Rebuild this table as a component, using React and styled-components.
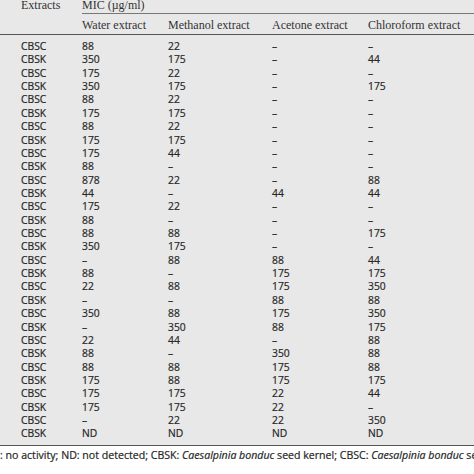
import React from "react";
import styled, { createGlobalStyle } from "styled-components";

const GlobalStyle = createGlobalStyle`
  html, body {
    margin: 0;
    padding: 0;
    background: #ffffff;
    overflow: hidden;
  }
`;

const Page = styled.div`
  width: 474px;
  height: 474px;
  overflow: hidden;
  background: #ffffff;
`;

const Sheet = styled.div`
  margin-top: -3px;
  background: #e8e8e8;
  border-bottom: 1.5px solid #555555;
`;

const Table = styled.table`
  width: 474px;
  border-collapse: collapse;
  table-layout: fixed;
`;

const HeadCell = styled.th`
  font-family: "Liberation Serif", "Times New Roman", serif;
  font-size: 12px;
  font-weight: normal;
  color: #333333;
  text-align: left;
  line-height: 14px;
  padding: ${(p) => (p.top ? "1px 0 1px" : "4px 0 2px")};
  padding-left: ${(p) => (p.first ? "21px" : "0")};
  white-space: nowrap;
  border-bottom: ${(p) => p.rule || "none"};
`;

const Row = styled.tr`
  &:first-child td {
    padding-top: 5px;
  }
  &:last-child td {
    padding-bottom: 4px;
  }
`;

const Cell = styled.td`
  font-family: "Open Sans", "Liberation Sans", sans-serif;
  font-size: 10.3px;
  color: #262626;
  line-height: 13.36px;
  padding: 0;
  padding-left: ${(p) => (p.first ? "21px" : "0")};
  white-space: nowrap;
  -webkit-text-stroke: 0.2px #262626;
`;

const Footnote = styled.div`
  font-family: "Open Sans", "Liberation Sans", sans-serif;
  font-size: 10.6px;
  color: #262626;
  line-height: 14px;
  padding-top: 2px;
  white-space: nowrap;
  overflow: hidden;
  -webkit-text-stroke: 0.2px #262626;
  em {
    font-style: italic;
  }
`;

const rows = [
  ["CBSC", "88", "22", "–", "–"],
  ["CBSK", "350", "175", "–", "44"],
  ["CBSC", "175", "22", "–", "–"],
  ["CBSK", "350", "175", "–", "175"],
  ["CBSC", "88", "22", "–", "–"],
  ["CBSK", "175", "175", "–", "–"],
  ["CBSC", "88", "22", "–", "–"],
  ["CBSK", "175", "175", "–", "–"],
  ["CBSC", "175", "44", "–", "–"],
  ["CBSK", "88", "–", "–", "–"],
  ["CBSC", "878", "22", "–", "88"],
  ["CBSK", "44", "–", "44", "44"],
  ["CBSC", "175", "22", "–", "–"],
  ["CBSK", "88", "–", "–", "–"],
  ["CBSC", "88", "88", "–", "175"],
  ["CBSK", "350", "175", "–", "–"],
  ["CBSC", "–", "88", "88", "44"],
  ["CBSK", "88", "–", "175", "175"],
  ["CBSC", "22", "88", "175", "350"],
  ["CBSK", "–", "–", "88", "88"],
  ["CBSC", "350", "88", "175", "350"],
  ["CBSK", "–", "350", "88", "175"],
  ["CBSC", "22", "44", "–", "88"],
  ["CBSK", "88", "–", "350", "88"],
  ["CBSC", "88", "88", "175", "88"],
  ["CBSK", "175", "88", "175", "175"],
  ["CBSC", "175", "175", "22", "44"],
  ["CBSK", "175", "175", "22", "–"],
  ["CBSC", "–", "22", "22", "350"],
  ["CBSK", "ND", "ND", "ND", "ND"],
];

const thick = "1.5px solid #555555";
const thin = "1px solid #777777";

export default function App() {
  return (
    <Page>
      <GlobalStyle />
      <Sheet>
        <Table>
          <colgroup>
            <col style={{ width: 82 }} />
            <col style={{ width: 86 }} />
            <col style={{ width: 104 }} />
            <col style={{ width: 96 }} />
            <col />
          </colgroup>
          <thead>
            <tr>
              <HeadCell top first>
                Extracts
              </HeadCell>
              <HeadCell top colSpan={4} rule={thin}>
                MIC (µg/ml)
              </HeadCell>
            </tr>
            <tr>
              <HeadCell first rule={thick} />
              <HeadCell rule={thick}>Water extract</HeadCell>
              <HeadCell rule={thick}>Methanol extract</HeadCell>
              <HeadCell rule={thick}>Acetone extract</HeadCell>
              <HeadCell rule={thick}>Chloroform extract</HeadCell>
            </tr>
          </thead>
          <tbody>
            {rows.map((r, i) => (
              <Row key={i}>
                {r.map((v, j) => (
                  <Cell key={j} first={j === 0}>
                    {v}
                  </Cell>
                ))}
              </Row>
            ))}
          </tbody>
        </Table>
      </Sheet>
      <Footnote>
        : no activity; ND: not detected; CBSK: <em>Caesalpinia bonduc</em> seed
        kernel; CBSC: <em>Caesalpinia bonduc</em> seed coat.
      </Footnote>
    </Page>
  );
}
